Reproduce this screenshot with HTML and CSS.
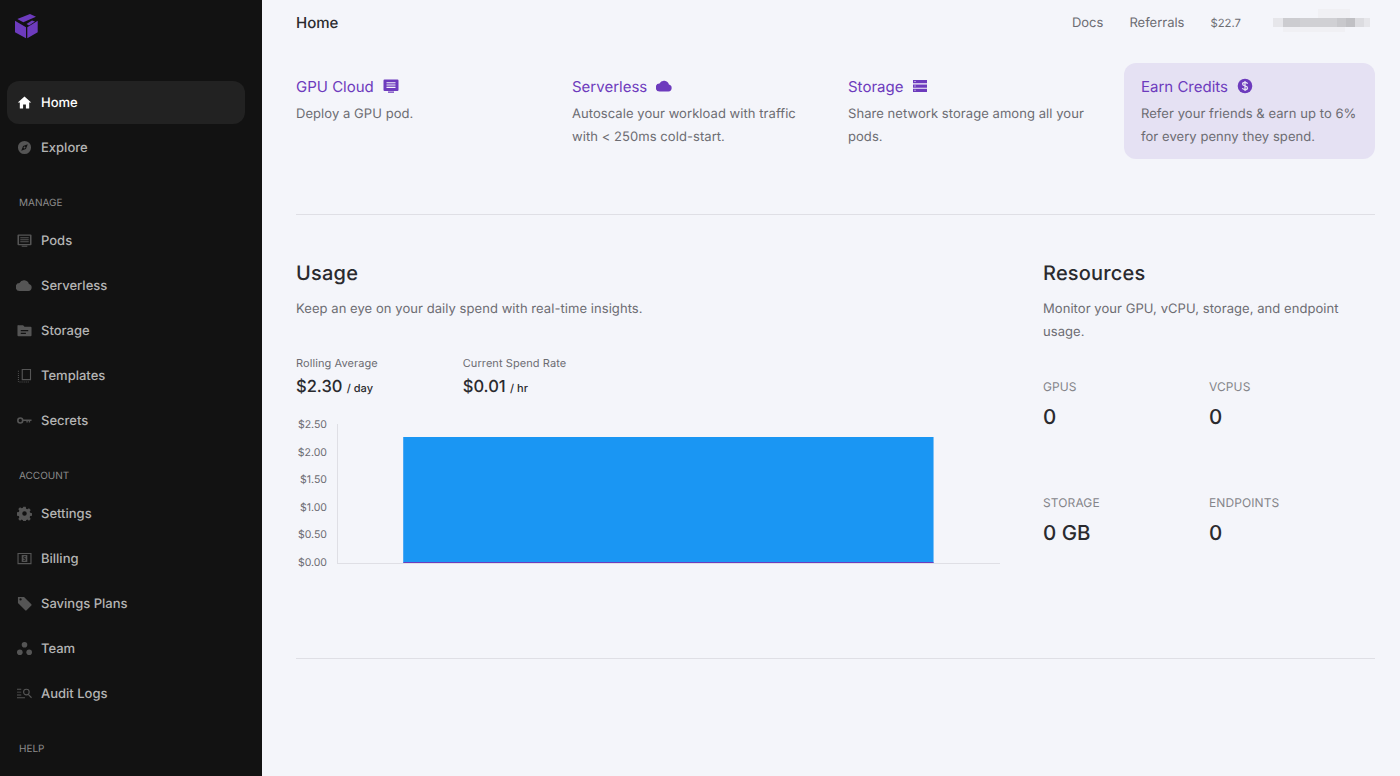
FILE: index.html
```html
<!DOCTYPE html>
<html lang="en">
<head>
<meta charset="utf-8">
<title>Home</title>
<link rel="stylesheet" href="styles.css">
</head>
<body>
<div class="app">
  <aside class="sidebar">
    <div class="logo">
      <svg width="23" height="25" viewBox="0 0 23 25"><path fill="#6d3bbd" d="M0 6.700 11 13.300V24.300L0 18.300ZM12.300 13.300 22.700 6.700V18.300L12.300 24.300ZM2.300 5 15 0 21 2.700 8.300 8.300Z"/><path fill="#6d3bbd" d="M11.500 10 14 11.500 20 7.500 17 6.500Z"/></svg>
    </div>
    <nav class="nav">
      <a class="item active"><svg class="ico" viewBox="0 0 16 16"><path fill="#fff" d="M8 1.500.8 8h2.200v6.500h3.500V10h3v4.500H13V8h2.200Z"/></svg>Home</a>
      <a class="item"><svg class="ico" viewBox="0 0 16 16"><path fill="#555" fill-rule="evenodd" d="M8 1a7 7 0 1 0 0 14A7 7 0 0 0 8 1Zm3.500 3.500L9.500 9.500l-5 2 2-5Z"/><circle cx="8" cy="8" r="1" fill="#555"/></svg>Explore</a>
      <div class="label">MANAGE</div>
      <a class="item"><svg class="ico" viewBox="0 0 16 16"><path fill="#555" fill-rule="evenodd" d="M1.500 1.500h13a1 1 0 0 1 1 1v9.500a1 1 0 0 1-1 1H1.500a1 1 0 0 1-1-1V2.500a1 1 0 0 1 1-1Zm.7 1.500v8.600h11.600V3ZM3.500 4.500h9v1h-9Zm0 2.200h9v1h-9Zm0 2.200h9v1h-9ZM5 13.500h6v1.200H5Z"/></svg>Pods</a>
      <a class="item"><svg class="ico wide" viewBox="0 0 16 12"><path fill="#555" d="M12.900 4.600A5 5 0 0 0 3.500 3.500 4 4 0 0 0 4 11.500h8.500a3.500 3.500 0 0 0 .4-6.900Z"/></svg>Serverless</a>
      <a class="item"><svg class="ico" viewBox="0 0 16 16"><path fill="#555" fill-rule="evenodd" d="M1.500 2.500h5l1.500 1.500h6.500a1 1 0 0 1 1 1v8a1 1 0 0 1-1 1h-13a1 1 0 0 1-1-1v-10a1 1 0 0 1 1-1Zm2.500 5v1.300h8V7.500Zm0 3v1.300h5.500v-1.300Z"/></svg>Storage</a>
      <a class="item"><svg class="ico" viewBox="0 0 16 16"><path fill="none" stroke="#555" stroke-width="1.200" d="M5.600 1.600h8.800v10.800H5.600Z"/><path fill="none" stroke="#555" stroke-width="1.100" stroke-dasharray="1 1.200" d="M1.500 3v12h11"/></svg>Templates</a>
      <a class="item"><svg class="ico" viewBox="0 0 16 16"><circle cx="3.500" cy="8" r="2.600" fill="none" stroke="#555" stroke-width="1.700"/><path fill="#555" d="M6 7h9.500v1.500H14V10h-1.500V8.500h-1V10H10V8.500H6Z"/></svg>Secrets</a>
      <div class="label">ACCOUNT</div>
      <a class="item"><svg class="ico" viewBox="0 0 16 16"><path fill="#555" fill-rule="evenodd" d="M6.700.8h2.600l.4 2 1.300.6 1.800-1 1.800 1.800-1.100 1.800.6 1.300 2 .4v2.600l-2 .4-.6 1.300 1.100 1.800-1.800 1.800-1.800-1.100-1.300.6-.4 2H6.700l-.4-2-1.300-.6-1.800 1.100-1.800-1.800 1.100-1.800-.6-1.300-2-.4V6.700l2-.4.600-1.300-1.100-1.800 1.800-1.800 1.800 1.100 1.300-.6ZM8 5.600a2.400 2.400 0 1 0 0 4.800 2.400 2.400 0 0 0 0-4.800Z"/></svg>Settings</a>
      <a class="item"><svg class="ico" viewBox="0 0 16 16"><path fill="none" stroke="#555" stroke-width="1.200" d="M1.100 2.600h13.800v10.800H1.100Z"/><rect x="5" y="4.300" width="6" height="7.400" fill="#555"/><path fill="none" stroke="#121212" stroke-width=".9" d="M9.400 6H7.300v2h1.500v2H6.700"/></svg>Billing</a>
      <a class="item"><svg class="ico" viewBox="0 0 16 16"><path fill="#555" fill-rule="evenodd" d="M1 1h6.500l7.800 7.800a1 1 0 0 1 0 1.400l-5.100 5.100a1 1 0 0 1-1.400 0L1 7.500Zm2.800 1.500a1.200 1.200 0 1 0 0 2.400 1.200 1.200 0 0 0 0-2.400Z"/></svg>Savings Plans</a>
      <a class="item"><svg class="ico" viewBox="0 0 16 16"><g fill="#555"><circle cx="8" cy="4" r="3"/><circle cx="3" cy="12" r="3"/><circle cx="13" cy="12" r="3"/></g></svg>Team</a>
      <a class="item"><svg class="ico" viewBox="0 0 16 16"><path fill="#555" d="M0 3h4.500v1H0Zm0 3h4.500v1H0Zm0 3h4.500v1H0Zm0 3h8.500v1H0Z"/><circle cx="10" cy="6.500" r="3" fill="none" stroke="#555" stroke-width="1.200"/><path stroke="#555" stroke-width="1.300" d="m12 9 3.500 3.500"/></svg>Audit Logs</a>
      <div class="label">HELP</div>
    </nav>
  </aside>

  <main class="main">
    <header class="topbar">
      <div class="page-title">Home</div>
      <div class="top-links">
        <a class="top-link">Docs</a>
        <a class="top-link">Referrals</a>
        <span class="balance">$22.7</span>
        <svg class="blur-name" width="97" height="24" viewBox="0 0 97 24"><path fill="#f0f0f4" d="M45 0h32v9H45ZM10 18h62v5H10Z"/><path fill="#e6e6ea" d="M0 9h10v9H0Z"/><path fill="#ccccd0" d="M10 9h17v9H10Z"/><path fill="#d0d0d4" d="M27 9h37v9H27Z"/><path fill="#c8c8cc" d="M64 9h9v9h-9Z"/><path fill="#c0c0c4" d="M73 9h9v9h-9Z"/><path fill="#dcdce0" d="M82 9h9v9h-9Z"/><path fill="#e6e6ea" d="M91 9h6v9h-6Z"/></svg>
      </div>
    </header>

    <section class="cards">
      <div class="card">
        <div class="card-title">GPU Cloud <svg class="card-ico" viewBox="0 0 16 16"><path fill="#6d3bbd" fill-rule="evenodd" d="M1.500 1.500h13a1 1 0 0 1 1 1v9.500a1 1 0 0 1-1 1H1.500a1 1 0 0 1-1-1V2.500a1 1 0 0 1 1-1ZM3.500 4.200v1.100h9V4.200Zm0 2.300v1.100h9V6.500Zm0 2.300v1.100h9V8.800ZM5 13.500h6v1.200H5Z"/></svg></div>
        <p class="card-text">Deploy a GPU pod.</p>
      </div>
      <div class="card">
        <div class="card-title">Serverless <svg class="card-ico" viewBox="0 0 16 12"><path fill="#6d3bbd" d="M12.900 4.600A5 5 0 0 0 3.500 3.500 4 4 0 0 0 4 11.500h8.500a3.500 3.500 0 0 0 .4-6.900Z"/></svg></div>
        <p class="card-text">Autoscale your workload with traffic with &lt; 250ms cold-start.</p>
      </div>
      <div class="card">
        <div class="card-title">Storage <svg class="card-ico" viewBox="0 0 16 16"><path fill="#6d3bbd" fill-rule="evenodd" d="M1 2h14v3.300H1Zm0 4.400h14v3.300H1Zm0 4.400h14V14H1ZM2.500 3v1h1V3Zm0 4.500v1h1v-1Zm0 4.300v1h1v-1Z"/></svg></div>
        <p class="card-text">Share network storage among all your pods.</p>
      </div>
      <div class="card highlight">
        <div class="card-title">Earn Credits <svg class="card-ico" viewBox="0 0 16 16"><circle cx="8" cy="8" r="7.300" fill="#6d3bbd"/><path fill="none" stroke="#e5e1f3" stroke-width="1.300" d="M10.500 5.800C10.300 4.800 9.300 4.400 8 4.400 6.700 4.400 5.600 5 5.600 6.100c0 2.400 4.900 1.300 4.900 3.800 0 1.100-1.100 1.700-2.500 1.700-1.300 0-2.400-.5-2.600-1.600M8 3v10"/></svg></div>
        <p class="card-text">Refer your friends &amp; earn up to 6% for every penny they spend.</p>
      </div>
    </section>

    <hr class="rule first">

    <section class="panels">
      <div class="usage">
        <h2 class="heading">Usage</h2>
        <p class="desc">Keep an eye on your daily spend with real-time insights.</p>
        <div class="stats">
          <div class="stat">
            <div class="stat-label">Rolling Average</div>
            <div class="stat-value">$2.30 <span class="stat-unit">/ day</span></div>
          </div>
          <div class="stat">
            <div class="stat-label">Current Spend Rate</div>
            <div class="stat-value">$0.01 <span class="stat-unit">/ hr</span></div>
          </div>
        </div>
        <div class="chart">
          <div class="y-axis">
            <span>$2.50</span><span>$2.00</span><span>$1.50</span><span>$1.00</span><span>$0.50</span><span>$0.00</span>
          </div>
          <div class="plot"><div class="bar"></div></div>
        </div>
      </div>
      <div class="resources">
        <h2 class="heading">Resources</h2>
        <p class="desc">Monitor your GPU, vCPU, storage, and endpoint usage.</p>
        <div class="res-grid">
          <div class="res"><div class="res-label">GPUS</div><div class="res-value">0</div></div>
          <div class="res"><div class="res-label">VCPUS</div><div class="res-value">0</div></div>
          <div class="res"><div class="res-label">STORAGE</div><div class="res-value">0 GB</div></div>
          <div class="res"><div class="res-label">ENDPOINTS</div><div class="res-value">0</div></div>
        </div>
      </div>
    </section>

    <hr class="rule second">
  </main>
</div>
</body>
</html>
```
FILE: styles.css
```css
* { box-sizing: border-box; }
html, body { margin: 0; height: 100%; overflow: hidden; }
body { font-family: Inter, "Liberation Sans", sans-serif; background: #f4f5fa; color: #2a2a2e; text-rendering: geometricPrecision; }
.app { display: flex; height: 776px; }

.sidebar { width: 262px; flex: none; background: #121212; overflow: hidden; }
.logo { height: 81px; padding: 14px 0 0 15px; }
.logo svg { display: block; }
.nav { display: flex; flex-direction: column; padding: 0 17px 0 7px; }
.item { display: flex; align-items: center; gap: 9px; height: 43px; margin-bottom: 2px; padding-left: 10px; border-radius: 12px; font-size: 13px; font-weight: 500; color: #b4b4b4; }
.item.active { background: #222; color: #fff; }
.ico { width: 15px; height: 15px; flex: none; }
.ico.wide { width: 16px; margin-left: -1px; }
.label { height: 16px; margin: 24px 0 8px 12px; font-size: 10px; line-height: 16px; color: #8b8b8b; }

.main { flex: 1; min-width: 0; padding: 0 25px 0 34px; }
.topbar { display: flex; justify-content: space-between; align-items: center; height: 44px; }
.page-title { font-size: 15px; font-weight: 500; color: #2a2a2e; }
.top-links { display: flex; align-items: center; padding-top: 2px; }
.top-link { font-size: 13px; color: #6c6c72; margin-right: 26px; }
.balance { font-size: 11.300px; color: #6c6c72; margin-right: 32px; }
.blur-name { display: block; margin: 0 5px 4px 0; }

.cards { display: grid; grid-template-columns: repeat(4, 251px); column-gap: 25px; margin-top: 19px; }
.card { height: 96px; padding-top: 14px; border-radius: 12px; }
.card.highlight { background: #e5e1f3; padding-left: 17px; padding-right: 10px; }
.card-title { display: flex; align-items: center; gap: 6px; height: 18px; font-size: 15px; color: #6d3bbd; }
.card-ico { width: 16px; height: 16px; margin-left: 3px; }
.card-text { margin: 8px 0 0; font-size: 13px; line-height: 23px; color: #6c6c72; letter-spacing: .06px; }

.rule { border: 0; border-top: 1px solid #dfdfe5; margin: 0; }
.rule.first { margin-top: 55px; }

.panels { display: flex; height: 443px; }
.usage { width: 747px; flex: none; padding-top: 46px; }
.resources { flex: 1; padding-top: 46px; }
.heading { margin: 0; font-size: 20px; font-weight: 500; line-height: 24px; color: #2a2a2e; letter-spacing: .2px; }
.desc { margin: 13px 0 0; font-size: 13px; line-height: 23px; color: #6c6c72; letter-spacing: .06px; }

.stats { display: flex; gap: 85px; margin-top: 34px; }
.stat-label { font-size: 11px; line-height: 16px; color: #6c6c72; letter-spacing: .08px; }
.stat-value { margin-top: 3px; font-size: 16.500px; line-height: 24px; font-weight: 500; color: #2a2a2e; }
.stat-unit { font-size: 11px; }

.chart { display: flex; align-items: flex-start; width: 704px; margin-top: 24px; }
.y-axis { width: 41px; height: 151px; margin-top: -6px; padding-right: 10px; display: flex; flex-direction: column; align-items: flex-end; justify-content: space-between; font-size: 10.500px; line-height: 13px; color: #6c6c72; }
.plot { flex: 1; height: 140px; border-left: 1px solid #dfdfe5; border-bottom: 1px solid #dfdfe5; padding: 13px 66px 0 65px; }
.bar { height: 100%; background: #1a96f3; border-bottom: 1px solid #6d3bbd; border-right: 1px solid #7dc1f7; border-left: 1px solid #4aa9f5; }

.res-grid { display: grid; grid-template-columns: 166px 1fr; grid-auto-rows: 115.500px; margin-top: 35px; }
.res-label { font-size: 12px; line-height: 16px; color: #85858a; letter-spacing: .1px; }
.res-value { margin-top: 9px; font-size: 20.500px; font-weight: 500; line-height: 26px; color: #2a2a2e; }
```
